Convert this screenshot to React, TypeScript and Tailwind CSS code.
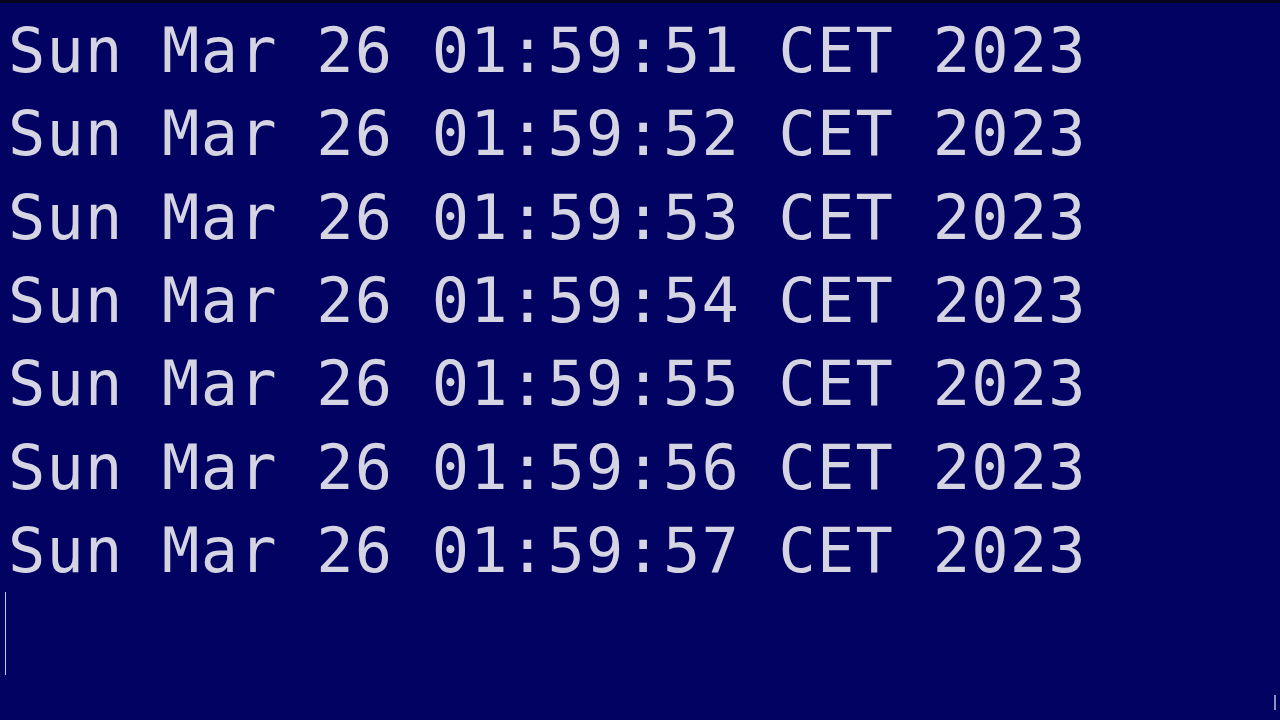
const lines = [51, 52, 53, 54, 55, 56, 57].map(
  (s) => `Sun Mar 26 01:59:${s} CET 2023`
);

export default function App() {
  return (
    <div className="relative h-[720px] w-[1280px] overflow-hidden border-t-[3px] border-[#05051c] bg-[#020262]">
      <div
        className="pl-[8px] pt-[6px] text-[62px] tracking-[1.2px] leading-[83.33px] text-[#d4d4e2] whitespace-pre"
        style={{ fontFamily: '"DejaVu Sans Mono", monospace' }}
      >
        {lines.map((l) => (
          <div key={l}>{l}</div>
        ))}
        <div className="h-[83px] -ml-[3px] w-px bg-[#c8c8dc]" />
      </div>
      <div className="absolute right-[4px] top-[692px] h-[15px] w-[2px] bg-[#9090c0]" />
    </div>
  );
}
